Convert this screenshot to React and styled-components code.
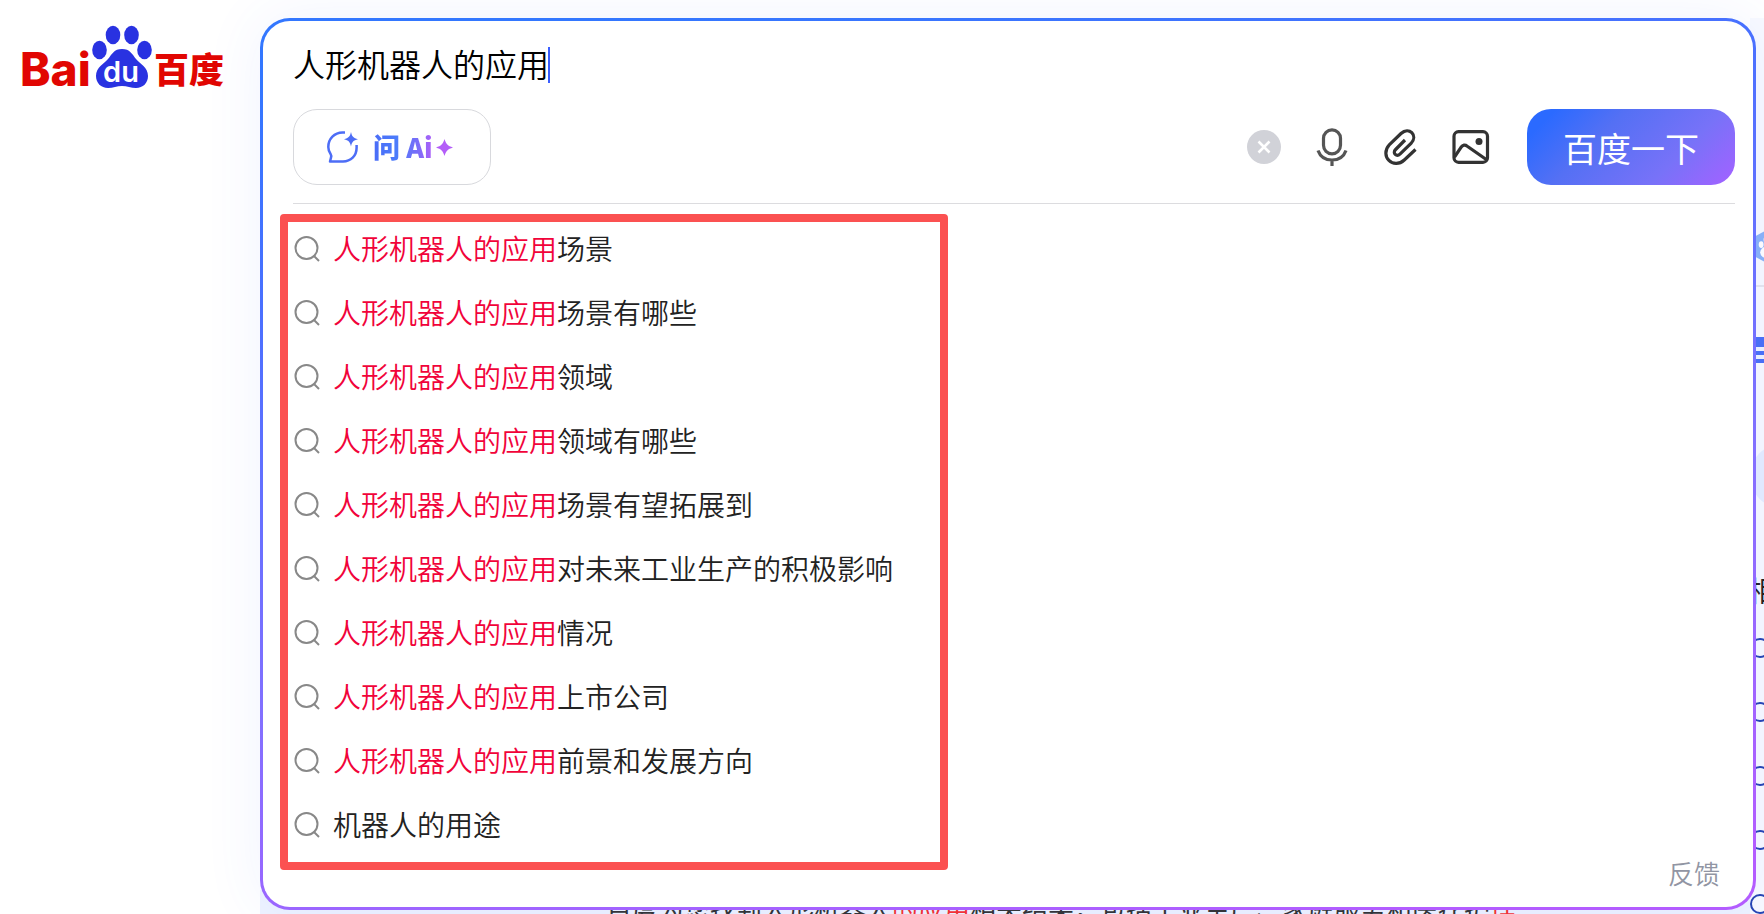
import { useState } from 'react';
import styled, { createGlobalStyle } from 'styled-components';

const GlobalStyle = createGlobalStyle`
  * { box-sizing:border-box; }
  body {
    margin:0;
    background:#fff;
    color:#222;
    font-family:"Noto Sans CJK SC", "Liberation Sans", sans-serif;
    font-weight:350;
  }
  button, input { font:inherit; }
  ul { list-style:none; margin:0; padding:0; }
  a { color:inherit; text-decoration:none; }
`;

const Page = styled.div`
  height:100vh;
  overflow:hidden;
  padding-top:18px;
`;

const Main = styled.main`
  display:grid;
  grid-template-columns:260px minmax(0, 1fr) 8px;
  align-items:start;
`;

/* logo */
const Logo = styled.a`
  display:flex; align-items:center;
  height:78px;
  padding-left:20px;
  color:#e10602;
  line-height:40px;
  white-space:nowrap;

  & svg { flex:none; margin:0 2px; }
`;
const Latin = styled.span`
  width:70px;
  padding-top:24px;
  font-family:Inter, "Liberation Sans", sans-serif;
  font-size:46px; font-weight:800;
`;
const Hanzi = styled.span`
  padding-top:22px;
  font-size:35px; font-weight:900;
`;

/* search panel */
const Panel = styled.form`
  position:relative; z-index:1;
  display:flex; flex-direction:column;
  padding:24px 18px 18px 30px;
  border:3px solid transparent;
  border-radius:30px;
  background:
    linear-gradient(#fff, #fff) padding-box,
    linear-gradient(170deg, #3377ff 5%, #4a70ff 25%, #8270ff 60%, #b35cff 95%) border-box;
  box-shadow:0 0 60px rgba(60, 100, 255, .08);
`;
const InputRow = styled.div`
  display:flex; align-items:center;
  height:40px;
`;
const Input = styled.input`
  field-sizing:content;
  padding:0 0 4px;
  border:0; outline:0;
  background:none;
  color:#000;
  font-size:32px; line-height:40px;
`;
const Caret = styled.span`
  width:2px; height:36px;
  margin-left:-1px;
  background:#3b5eff;
`;
const Tools = styled.div`
  display:flex; align-items:center; justify-content:space-between;
  margin-top:24px; padding-bottom:18px;
  border-bottom:1px solid #dcdcdf;
`;
const AskButton = styled.button`
  display:flex; align-items:center; gap:15px;
  width:198px; height:76px;
  padding:0 0 0 32px;
  border:1px solid #d8d9dd; border-radius:24px;
  background:#fff;
`;
const AskText = styled.span`
  display:flex; align-items:center; gap:3px;
  font-size:27px; line-height:32px; font-weight:900;

  & b {
    font-weight:900;
    background:linear-gradient(90deg, #4a6cf7, #4c7cfb 40%, #7a6cf8 75%, #b160f8);
    -webkit-background-clip:text; background-clip:text;
    color:transparent;
  }
`;
const Actions = styled.div`
  display:flex; align-items:center; gap:33px;
`;
const IconButton = styled.button`
  display:flex;
  padding:0; border:0;
  background:none;
  color:${(props) => props.$color || '#333'};
`;
const Submit = styled.button`
  width:208px; height:76px;
  margin-left:4px; padding:0;
  border:0; border-radius:24px;
  background:linear-gradient(135deg, #2b6aff 10%, #5470f4 35%, #7872f8 70%, #9d64ff 95%);
  color:#fff;
  font-size:34px; font-weight:400;
`;

const Suggest = styled.div`
  position:relative;
  width:668px;
  margin-top:13px;
`;
const Frame = styled.div`
  position:absolute; inset:-3px 13px -13px -13px;
  border:8px solid #fb5151; border-radius:4px;
  pointer-events:none;
`;
const Item = styled.a`
  display:flex; align-items:center; gap:12px;
  height:64px;
  font-size:28px; line-height:40px;

  & span { padding-bottom:2px; }
  & em { color:#f1033a; font-style:normal; }
`;
const Feedback = styled.a`
  align-self:flex-end;
  padding-right:15px;
  color:#9195a3;
  font-size:26px; line-height:32px;
`;

/* what shows beside and below the panel */
const Side = styled.aside`
  display:flex; flex-direction:column;
  width:24px; height:896px;
  margin-left:-6px; padding-top:212px;
  background:#f8faff;
`;
const Rule = styled.hr`
  width:100%; height:2px;
  margin:22px 0 50px; border:0;
  background:#e6e7ee;
`;
const Banner = styled.div`
  flex:none;
  height:26px;
  background:linear-gradient(#4a70f6 10px, #eef3ff 10px 14px, #4a70f6 14px 18px, #eef3ff 18px 22px, #4a70f6 22px);
`;
const Disc = styled.div`
  flex:none;
  width:64px; height:64px;
  margin:81px 0 66px;
  border-radius:50%;
  background:#e6eeff;
`;
const SideTitle = styled.span`
  align-self:center;
  font-size:28px; line-height:32px; font-weight:400;
`;
const Ring = styled.i`
  flex:none;
  width:20px; height:20px;
  margin-top:${(props) => (props.$first ? '32px' : '44px')};
  border:2px solid #2645b3; border-radius:50%;
`;
const Snippet = styled.p`
  margin:-24px 8px 0 260px; padding-left:346px;
  background:#eef3ff;
  color:#333;
  font-size:26px; line-height:36px; font-weight:400;
  white-space:nowrap;

  & em { color:#f73131; font-style:normal; }
`;

const KEYWORD = '人形机器人的应用';
const suggestions = [
  [KEYWORD, '场景'],
  [KEYWORD, '场景有哪些'],
  [KEYWORD, '领域'],
  [KEYWORD, '领域有哪些'],
  [KEYWORD, '场景有望拓展到'],
  [KEYWORD, '对未来工业生产的积极影响'],
  [KEYWORD, '情况'],
  [KEYWORD, '上市公司'],
  [KEYWORD, '前景和发展方向'],
  ['', '机器人的用途'],
];

function Paw() {
  return (
    <svg width="60" height="64" viewBox="0 0 60 64">
      <g fill="#2932e1">
        <ellipse cx="7.5" cy="25" rx="7.3" ry="9.2" />
        <ellipse cx="21" cy="10" rx="7.3" ry="9.3" />
        <ellipse cx="39.5" cy="10" rx="7.3" ry="9.3" />
        <ellipse cx="52.5" cy="25" rx="7.3" ry="9.2" />
        <path d="M30 24c-8 0-10 5-14 10C12 39 4 42 4 51c0 7 5 12 12 12 5 0 9-2 14-2s9 2 14 2c7 0 12-5 12-12 0-9-8-12-12-17-4-5-6-10-14-10z" />
      </g>
      <text x="29" y="57" fill="#fff" textAnchor="middle" fontFamily="Inter, sans-serif" fontSize="29" fontWeight="600">du</text>
    </svg>
  );
}

function SearchIcon() {
  return (
    <svg width="28" height="28" viewBox="0 0 28 28" fill="none" stroke="#888" strokeWidth="2">
      <circle cx="13.5" cy="13" r="11" />
      <path d="M20.5 20.5l5.500 5.500" />
    </svg>
  );
}

function AskIcon() {
  return (
    <svg width="32" height="32" viewBox="0 0 32 32" fill="none">
      <path d="M19 1.500h-2.500C8.500 1.500 2.300 7.800 2.300 16c0 3.500 1 5.400 2.400 7.300.8 1.100.7 2.200.2 3.700L4 30.500h13c7.800 0 13.600-5.500 13.600-13.700V14" stroke="#4d6df6" strokeWidth="2.500" strokeLinejoin="round" />
      <path d="M25 1c1 4.600 2.300 6 7 7.200-4.700 1.200-6 2.600-7 7.200-1-4.600-2.300-6-7-7.200 4.700-1.200 6-2.600 7-7.200z" fill="#4d6df6" />
    </svg>
  );
}

function Star() {
  return (
    <svg width="17" height="17" viewBox="0 0 17 17">
      <path d="M8.500 0c1.600 5 3.200 6.800 8.500 8.500-5.300 1.700-6.900 3.500-8.500 8.500C6.900 12 5.300 10.200 0 8.500 5.300 6.800 6.900 5 8.500 0z" fill="#b45ef8" />
    </svg>
  );
}

function ClearIcon() {
  return (
    <svg width="34" height="34" viewBox="0 0 34 34">
      <circle cx="17" cy="17" r="17" fill="#d1d2d8" />
      <path d="M11.500 11.500l11 11m0-11l-11 11" stroke="#fff" strokeWidth="2.600" />
    </svg>
  );
}

function MicIcon() {
  return (
    <svg width="36" height="38" viewBox="0 0 36 38" fill="none" stroke="currentColor" strokeWidth="3.200">
      <rect x="9.500" y="1.800" width="17" height="24" rx="8.500" />
      <path d="M4 22.500C6.200 28.600 11.500 32 18 32s11.800-3.400 14-9.500M18 32v6" />
    </svg>
  );
}

function ClipIcon() {
  return (
    <svg width="36" height="38" viewBox="0 0 36 38" fill="none" stroke="currentColor" strokeWidth="3.200">
      <path d="M22 12L12.600 21.500c-3.600 3.700 1 7.900 4.600 4.400L28 15.500C35.500 7.500 26-2 18 5.500L6.500 16.500C-4 28 10.500 42 21.300 32L32.500 21.500" />
    </svg>
  );
}

function ImageIcon() {
  return (
    <svg width="38" height="34" viewBox="0 0 38 34" fill="none" stroke="currentColor" strokeWidth="3.200">
      <rect x="2" y="1.700" width="33.500" height="30.600" rx="4.500" />
      <path d="M2.500 27L9 17.300c1.800-2.500 4-2.800 6.300-1.100L35 30" />
      <circle cx="27" cy="11.500" r="3.500" fill="currentColor" stroke="none" />
    </svg>
  );
}

function Badge() {
  return (
    <svg width="34" height="34" viewBox="0 0 34 34">
      <path d="M17 0l15 8v18l-15 8L2 26V8z" fill="#8ab3f8" />
      <g fill="#fff">
        <ellipse cx="11" cy="15" rx="2.500" ry="3.500" />
        <ellipse cx="16" cy="10" rx="2.500" ry="3.500" />
        <ellipse cx="17" cy="23" rx="7" ry="6" />
      </g>
    </svg>
  );
}

function App() {
  const [word, setWord] = useState(KEYWORD);

  return (
    <Page>
      <GlobalStyle />
      <Main>
        <Logo href="#">
          <Latin>Bai</Latin>
          <Paw />
          <Hanzi>百度</Hanzi>
        </Logo>

        <Panel onSubmit={(e) => e.preventDefault()}>
          <InputRow>
            <Input aria-label="搜索" value={word} onChange={(e) => setWord(e.target.value)} />
            <Caret />
          </InputRow>
          <Tools>
            <AskButton type="button">
              <AskIcon />
              <AskText><b>问 Ai</b><Star /></AskText>
            </AskButton>
            <Actions>
              <IconButton type="button" aria-label="清空" onClick={() => setWord('')}><ClearIcon /></IconButton>
              <IconButton type="button" aria-label="语音" $color="#555"><MicIcon /></IconButton>
              <IconButton type="button" aria-label="附件"><ClipIcon /></IconButton>
              <IconButton type="button" aria-label="图片"><ImageIcon /></IconButton>
              <Submit type="submit">百度一下</Submit>
            </Actions>
          </Tools>

          <Suggest>
            <ul>
              {suggestions.map(([hit, rest]) => (
                <li key={rest}>
                  <Item href="#"><SearchIcon /><span><em>{hit}</em>{rest}</span></Item>
                </li>
              ))}
            </ul>
            <Frame />
          </Suggest>
          <Feedback href="#">反馈</Feedback>
        </Panel>

        <Side>
          <Badge />
          <Rule />
          <Banner />
          <Disc />
          <SideTitle>相</SideTitle>
          <Ring $first />
          <Ring />
          <Ring />
          <Ring />
          <Ring />
        </Side>
      </Main>
      <Snippet>
        百度为您找到人形机器人<em>的应用</em>相关结果，包括工业生产、家庭服务和医疗护<em>理</em>
      </Snippet>
    </Page>
  );
}

export default App;
